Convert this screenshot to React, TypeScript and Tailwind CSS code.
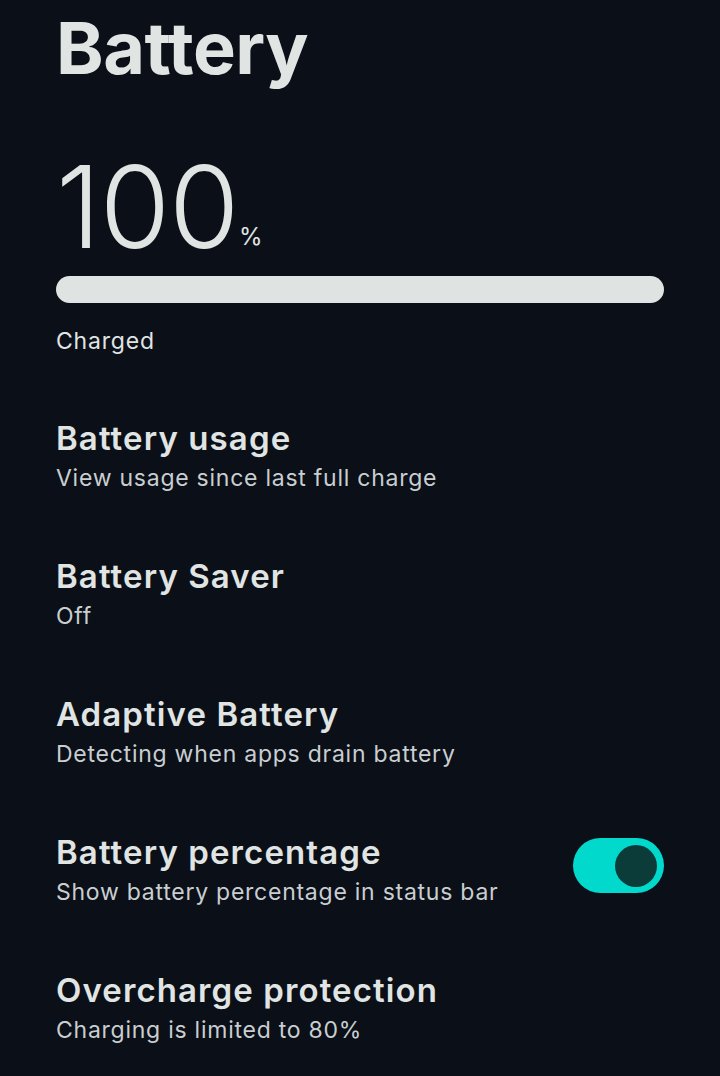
import React, { useState } from 'react';

const rows = [
  { title: 'Battery usage', sub: 'View usage since last full charge' },
  { title: 'Battery Saver', sub: 'Off' },
  { title: 'Adaptive Battery', sub: 'Detecting when apps drain battery' },
  { title: 'Battery percentage', sub: 'Show battery percentage in status bar', toggle: true },
  { title: 'Overcharge protection', sub: 'Charging is limited to 80%' },
];

export default function App() {
  const [on, setOn] = useState(true);

  return (
    <div
      className="w-[720px] h-[1076px] overflow-hidden bg-[#0a0f18] text-[#e0e5e4] px-[56px]"
      style={{ fontFamily: 'Inter, "Noto Sans", sans-serif' }}
    >
      {/* header */}
      <h1 className="text-[72px] font-bold leading-none pt-[12px] tracking-[-0.5px]">Battery</h1>

      {/* level */}
      <div className="flex items-end mt-[80px]">
        <span className="text-[114px] font-light leading-[86px] tracking-[-1.2px]">100</span>
        <span className="text-[24px] leading-none ml-[1px] mb-[1px]">%</span>
      </div>
      <div className="mt-[26px] h-[27px] w-full rounded-full bg-[#dfe3e2]" />
      <div className="mt-[23px] text-[23px] leading-[30px] tracking-[0.8px]">Charged</div>

      {/* settings */}
      <div className="mt-[62px] flex flex-col gap-[63px]">
        {rows.map((r) => (
          <div key={r.title} className="flex items-start justify-between">
            <div>
              <div className="text-[33px] font-semibold leading-[40px] tracking-[1.1px]">{r.title}</div>
              <div className="mt-[5px] text-[23px] leading-[30px] tracking-[0.75px] text-[#c9ced1]">{r.sub}</div>
            </div>
            {r.toggle && (
              <button
                onClick={() => setOn(!on)}
                className="mt-[6px] w-[91px] h-[55px] rounded-full bg-[#00d9cc] flex items-center justify-end px-[7px]"
              >
                <span className="w-[42px] h-[42px] rounded-full bg-[#0c3c39]" />
              </button>
            )}
          </div>
        ))}
      </div>
    </div>
  );
}
